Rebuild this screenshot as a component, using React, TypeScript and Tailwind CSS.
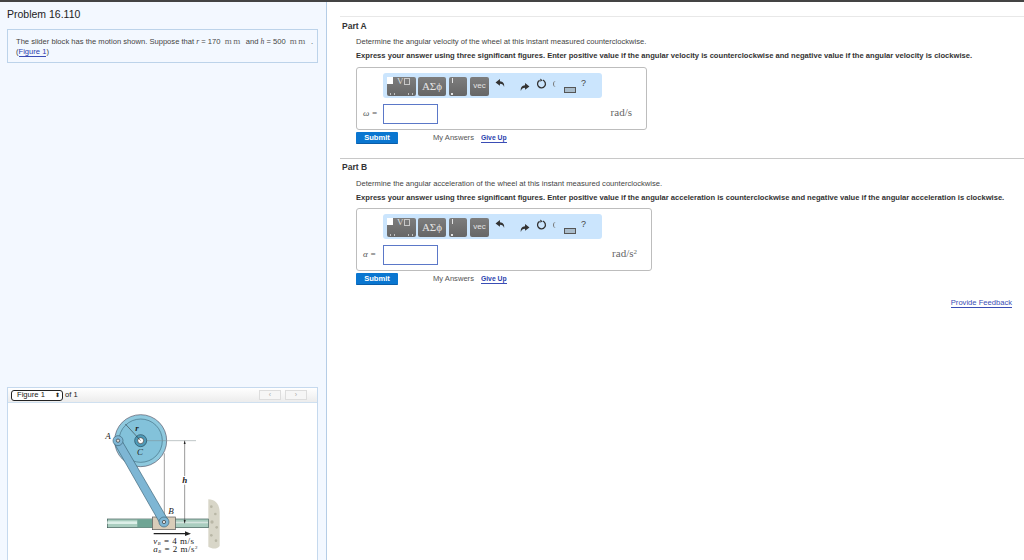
import type { ReactNode } from 'react'

const sans = { fontFamily: '"Liberation Sans", Arial, sans-serif' }

function ToolButton({ className, children }: { className: string; children?: ReactNode }) {
  return (
    <div className={`relative flex h-[19px] items-center justify-center rounded-[2px] bg-gradient-to-b from-[#7d7d7d] to-[#666] text-[#e4e4e4] ${className}`}>
      {children}
    </div>
  )
}

function MathToolbar() {
  return (
    <div className="flex h-[25px] w-[219px] items-center rounded-[3px] bg-[#cbe5fd] pl-[4px] pt-[1px]">
      <ToolButton className="w-[29px]">
        <span className="absolute left-0 top-0 h-[7px] w-[6px] bg-white" />
        <span className="absolute left-[10px] top-0 font-['Liberation_Serif'] text-[9px] leading-[9px] text-[#ddd]">V</span>
        <span className="absolute left-[17px] top-[1px] h-[7px] w-[6px] border border-[#c8c8c8]" />
        <span className="absolute bottom-[1px] left-[3px] h-[2px] w-[5px] border-x border-[#c0c0c0]" />
        <span className="absolute bottom-[1px] right-[3px] h-[2px] w-[5px] border-x border-[#c0c0c0]" />
      </ToolButton>
      <ToolButton className="ml-[2px] w-[28px] font-['Liberation_Serif'] text-[11px]">ΑΣϕ</ToolButton>
      <ToolButton className="ml-[3px] w-[18px]">
        <span className="absolute left-[3px] top-[1px] h-[5px] w-px bg-[#e4e4e4]" />
        <span className="absolute bottom-[1px] left-[2px] h-[2px] w-[2px] bg-[#e4e4e4]" />
      </ToolButton>
      <ToolButton className="ml-[3px] w-[19px] text-[8px]">vec</ToolButton>
      <svg viewBox="0 0 10 10" className="mb-[6px] ml-[6px] h-[11px] w-[11px] fill-[#333]">
        <path d="M4.500 1 .5 4l4 3V5.200c2 0 3.200.8 3.800 3C8.800 5 7.300 3 4.500 2.900z" />
      </svg>
      <svg viewBox="0 0 10 10" className="ml-[13px] mt-[3px] h-[11px] w-[11px] -scale-x-100 fill-[#333]">
        <path d="M4.500 1 .5 4l4 3V5.200c2 0 3.200.8 3.800 3C8.800 5 7.300 3 4.500 2.900z" />
      </svg>
      <svg viewBox="0 0 12 12" className="mb-[5px] ml-[6px] h-[11px] w-[11px] fill-none stroke-[#333] stroke-[1.4]">
        <path d="M7.500 2.400A4.300 4.300 0 1 1 4 2.600" />
        <path d="M4.600 .6 7.200 2.400 4.800 4.200" className="fill-[#333] stroke-none" />
      </svg>
      <span className="mb-[4px] ml-[6px] h-[6px] w-[3px] rounded-l-full border-l border-[#777]" />
      <div className="ml-[8px] mt-[7px] h-[6px] w-[12px] border border-[#555] bg-[#a9bccb]" />
      <span className="mb-[6px] ml-[5px] text-[9px] leading-none text-[#444]">?</span>
    </div>
  )
}

function AnswerBox({ symbol, className, unit }: { symbol: string; className: string; unit: ReactNode }) {
  return (
    <div className={`flex h-[63px] flex-col rounded-[3px] border border-[#bdbdbd] pl-[26px] pt-[5px] ${className}`}>
      <MathToolbar />
      <div className="mt-[6px] flex items-center">
        <span className="absolute ml-[-20px] font-['Liberation_Serif'] text-[9px] italic text-[#555]">{symbol} =</span>
        <div className="h-[20px] w-[55px] border border-[#5b78c8] bg-white" />
        <span className="mb-[3px] ml-auto mr-[14px] font-['Liberation_Serif'] text-[11px] text-[#666]">{unit}</span>
      </div>
    </div>
  )
}

function SubmitRow() {
  return (
    <div className="mt-[2px] flex h-[12px] items-center">
      <div className="flex h-[12px] w-[42px] items-center justify-center rounded-[1px] border-b border-[#0a5da8] bg-[#0a76d0] text-[7.600px] font-bold text-white">
        Submit
      </div>
      <span className="ml-[35px] text-[7.600px] text-[#555]">My Answers</span>
      <span className="ml-[7px] border-b border-[#3a4db5] text-[6.800px] font-bold leading-[8px] text-[#2c3fae]">Give Up</span>
    </div>
  )
}

function PartSection({
  title,
  lead,
  condition,
  symbol,
  leadGap,
  boxClass,
  unit,
}: {
  title: string
  lead: string
  condition: string
  symbol: string
  leadGap: string
  boxClass: string
  unit: ReactNode
}) {
  return (
    <section className="relative pl-[2px]">
      <h2 className="text-[8.500px] font-bold leading-[10px] text-[#333]">{title}</h2>
      <div className="pl-[14px]">
        <p className={`whitespace-nowrap text-[7.600px] leading-[9px] text-[#444] ${leadGap}`}>{lead}</p>
        <p className="mt-[5px] whitespace-nowrap text-[7.600px] font-bold leading-[9px] text-[#333]">{condition}</p>
        <AnswerBox symbol={symbol} className={boxClass} unit={unit} />
        <SubmitRow />
      </div>
    </section>
  )
}

function WheelFigure() {
  return (
    <svg viewBox="0 0 420 450" className="h-[150px] w-[140px]">
      <path d="M355 268c20 0 34 14 34 40v100c-10 12-24 8-34 2z" fill="#d8d6c8" />
      <g fill="#b9b7a6">
        <circle cx="364" cy="290" r="4" />
        <circle cx="376" cy="312" r="4" />
        <circle cx="366" cy="336" r="5" />
        <circle cx="380" cy="352" r="4" />
        <circle cx="364" cy="376" r="4" />
        <circle cx="378" cy="392" r="4" />
      </g>
      <rect x="52" y="327" width="303" height="26" fill="#a9cdbf" stroke="#3c5a55" strokeWidth="2" />
      <rect x="52" y="334" width="90" height="8" fill="#dcefe8" />
      <rect x="142" y="328" width="46" height="24" fill="#6fa595" />
      <rect x="256" y="335" width="98" height="5" fill="#d5e5df" />
      <circle cx="152" cy="92" r="78" fill="#8ec9de" stroke="#556" strokeWidth="2" />
      <circle cx="152" cy="92" r="65" fill="#83c2da" stroke="#2e5566" strokeWidth="1.500" />
      <line x1="152" y1="92" x2="318" y2="92" stroke="#7f8c90" strokeWidth="1.500" />
      <line x1="223" y1="130" x2="223" y2="322" stroke="#444" strokeWidth="1.500" />
      <line x1="284" y1="92" x2="284" y2="198" stroke="#333" strokeWidth="1.500" />
      <line x1="284" y1="224" x2="284" y2="340" stroke="#333" strokeWidth="1.500" />
      <path d="M284 92 281 102H287z" fill="#222" />
      <path d="M284 340 281 330H287z" fill="#222" />
      <circle cx="152" cy="92" r="18" fill="#4e9ab8" stroke="#24485a" strokeWidth="2" />
      <circle cx="152" cy="92" r="9" fill="#fff" stroke="#333" strokeWidth="2" />
      <line x1="152" y1="92" x2="106" y2="42" stroke="#222" strokeWidth="1.500" />
      <rect x="187" y="321" width="69" height="38" fill="#d9cdb9" stroke="#555" strokeWidth="2" />
      <path d="M74 102 98 96 232 326 210 340z" fill="#7eb6d4" stroke="#3d6377" strokeWidth="2" />
      <circle cx="84" cy="92" r="15" fill="#7eb6d4" stroke="#3d6377" strokeWidth="2" />
      <circle cx="84" cy="92" r="5" fill="#ddd" stroke="#333" strokeWidth="2" />
      <circle cx="222" cy="336" r="15" fill="#7eb6d4" stroke="#3d6377" strokeWidth="2" />
      <circle cx="222" cy="336" r="5" fill="#ddd" stroke="#333" strokeWidth="2" />
      <path d="M191 369H285V364L303 371 285 378V373H191z" fill="#222" />
      <g fontFamily="Liberation Serif" fill="#222" fontSize="27">
        <text x="46" y="88" fontStyle="italic">A</text>
        <text x="141" y="134" fontStyle="italic">C</text>
        <text x="235" y="312" fontStyle="italic">B</text>
        <text x="136" y="64" fontStyle="italic" fontWeight="bold">r</text>
        <text x="277" y="218" fontStyle="italic" fontWeight="bold">h</text>
        <text x="190" y="402" fontSize="27" letterSpacing="1.500">
          <tspan fontStyle="italic">v</tspan>
          <tspan fontSize="14" dy="3" fontStyle="italic">B</tspan>
          <tspan dy="-3"> = 4 m/s</tspan>
        </text>
        <text x="190" y="427" fontSize="27" letterSpacing="1.500">
          <tspan fontStyle="italic">a</tspan>
          <tspan fontSize="14" dy="3" fontStyle="italic">B</tspan>
          <tspan dy="-3"> = 2 m/s</tspan>
          <tspan fontSize="15" dy="-10">2</tspan>
        </text>
      </g>
    </svg>
  )
}

function ProblemPanel() {
  return (
    <aside className="flex h-[558px] w-[327px] shrink-0 flex-col border-r border-[#b5cde6] bg-[#f3f8ff] pl-[7px]">
      <h1 className="mt-[6px] text-[10.500px] leading-[13px] text-[#222]">Problem 16.110</h1>
      <div className="mt-[8px] h-[34px] w-[311px] border border-[#bcd3ea] pl-[8px] pt-[6px] text-[7.600px] leading-[10px] text-[#444]">
        <p className="whitespace-nowrap">
          The slider block has the motion shown. Suppose that <i className="font-['Liberation_Serif']">r</i> = 170{' '}
          <span className="mx-[2px] font-['Liberation_Serif'] text-[9px] tracking-[1.500px] text-[#666]">mm</span> and{' '}
          <i className="font-['Liberation_Serif']">h</i> = 500{' '}
          <span className="mx-[2px] font-['Liberation_Serif'] text-[9px] tracking-[1.500px] text-[#666]">mm</span> .
        </p>
        <p>
          (<span className="border-b border-[#3a4db5] text-[#2c3fae]">Figure 1</span>)
        </p>
      </div>
      <div className="mt-auto h-[173px] w-[311px] border-x border-t border-[#c5d9ee] bg-white">
        <div className="flex h-[15px] items-center border-b border-[#cfe0f0] bg-gradient-to-b from-white to-[#ececec] pl-[3px] text-[7.600px] text-[#222]">
          <div className="flex h-[11px] w-[52px] items-center justify-between rounded-[3px] border border-[#222] bg-white pl-[5px] pr-[2px]">
            Figure 1
            <span className="text-[6px] leading-none">⬍</span>
          </div>
          <span className="ml-[2px]">of 1</span>
          <div className="ml-auto mr-[10px] flex gap-[4px] text-[7px] text-[#aaa]">
            <span className="flex h-[10px] w-[22px] items-center justify-center border border-[#ddd] bg-[#f6f6f6]">‹</span>
            <span className="flex h-[10px] w-[22px] items-center justify-center border border-[#ddd] bg-[#f6f6f6]">›</span>
          </div>
        </div>
        <div className="pl-[82px] pt-[7px]">
          <WheelFigure />
        </div>
      </div>
    </aside>
  )
}

export default function App() {
  return (
    <div className="h-[560px] w-[1024px] overflow-hidden bg-white" style={sans}>
      <div className="h-[2px] bg-[#444]" />
      <div className="flex">
        <ProblemPanel />
        <main className="flex-1 pl-[13px] pt-[14px]">
          <div className="mb-[4px] h-[1px] bg-[#e8e8e8]" />
          <PartSection
            title="Part A"
            lead="Determine the angular velocity of the wheel at this instant measured counterclockwise."
            condition="Express your answer using three significant figures. Enter positive value if the angular velocity is counterclockwise and negative value if the angular velocity is clockwise."
            symbol="ω"
            leadGap="mt-[6px]"
            boxClass="mt-[7px] w-[291px]"
            unit="rad/s"
          />
          <div className="mb-[3px] mt-[14px] h-[1px] bg-[#c8c8c8]" />
          <PartSection
            title="Part B"
            lead="Determine the angular acceleration of the wheel at this instant measured counterclockwise."
            condition="Express your answer using three significant figures. Enter positive value if the angular acceleration is counterclockwise and negative value if the angular acceleration is clockwise."
            symbol="α"
            leadGap="mt-[7px]"
            boxClass="mt-[6px] w-[296px]"
            unit={
              <>
                rad/s<sup className="text-[7px]">2</sup>
              </>
            }
          />
          <div className="mt-[13px] pr-[12px] text-right text-[7.600px] leading-[9px]">
            <span className="border-b border-[#3a4db5] text-[#3a4db5]">Provide Feedback</span>
          </div>
        </main>
      </div>
    </div>
  )
}
